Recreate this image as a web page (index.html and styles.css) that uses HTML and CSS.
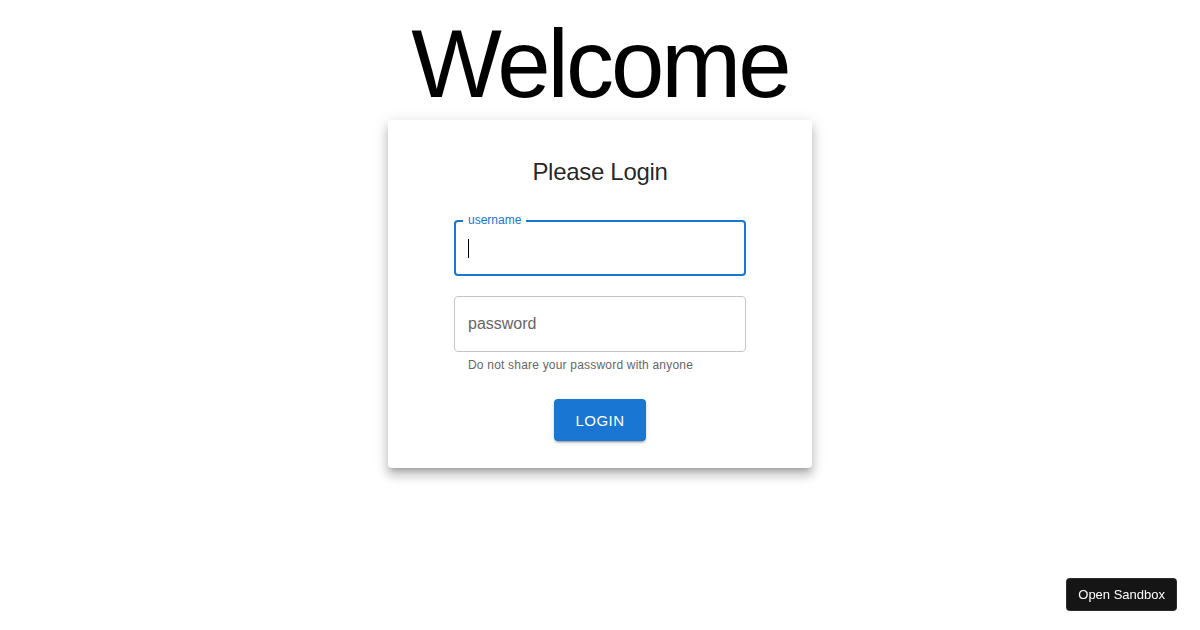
FILE: index.html
```html
<!DOCTYPE html>
<html lang="en">
<head>
    <meta charset="UTF-8">
    <meta name="viewport" content="width=device-width, initial-scale=1.0">
    <title>Login</title>
    <link rel="stylesheet" href="styles.css">
</head>
<body>
    <div class="page">
        <h1 class="welcome">Welcome</h1>
        <div class="card">
            <h2 class="card-title">Please Login</h2>
            <form class="login-form">
                <div class="field focused">
                    <span class="field-label">username</span>
                    <span class="caret"></span>
                </div>
                <div class="field-group">
                    <div class="field">
                        <input type="password" class="field-input" placeholder="password">
                    </div>
                    <p class="helper">Do not share your password with anyone</p>
                </div>
                <button type="button" class="login-btn">Login</button>
            </form>
        </div>
    </div>

    <button type="button" class="sandbox-btn">Open Sandbox</button>
</body>
</html>
```

FILE: styles.css
```css
html, body {
    margin: 0;
    height: 100%;
    background: #fff;
    font-family: "Liberation Sans", Arial, sans-serif;
}

.page {
    display: flex;
    flex-direction: column;
    align-items: center;
    padding-top: 8px;
}

.welcome {
    margin: 0;
    font-size: 96px;
    line-height: 112px;
    font-weight: 400;
    letter-spacing: -3px;
    color: #000;
}

.card {
    width: 424px;
    box-sizing: border-box;
    padding: 36px 0 27px;
    background: #fff;
    border-radius: 4px;
    box-shadow: 0 5px 5px -3px rgba(0, 0, 0, 0.2),
                0 8px 10px 1px rgba(0, 0, 0, 0.14),
                0 3px 14px 2px rgba(0, 0, 0, 0.12);
}

.card-title {
    margin: 0;
    text-align: center;
    font-size: 24px;
    line-height: 32px;
    font-weight: 400;
    letter-spacing: -0.3px;
    color: rgba(0, 0, 0, 0.87);
}

.login-form {
    display: flex;
    flex-direction: column;
    align-items: center;
    margin-top: 32px;
}

.field {
    position: relative; /* for the floating label */
    width: 292px;
    height: 56px;
    box-sizing: border-box;
    border: 1px solid #c4c4c4;
    border-radius: 4px;
    display: flex;
    align-items: center;
}

.field.focused {
    border: 2px solid #1976d2;
    padding-left: 12px;
}

.field-label {
    position: absolute;
    top: -9px;
    left: 7px;
    padding: 0 5px;
    background: #fff;
    font-size: 12px;
    line-height: 14px;
    color: #1976d2;
}

.caret {
    width: 1px;
    height: 19px;
    background: #000;
}

.field-group {
    margin-top: 20px;
}

.field-input {
    width: 100%;
    height: 100%;
    box-sizing: border-box;
    border: none;
    outline: none;
    background: transparent;
    padding: 0 13px;
    font-family: inherit;
    font-size: 16px;
    color: rgba(0, 0, 0, 0.87);
}

.field-input::placeholder {
    color: #666;
    opacity: 1;
}

.helper {
    margin: 3px 14px 0;
    font-size: 12px;
    line-height: 20px;
    letter-spacing: 0.2px;
    color: #666;
}

.login-btn {
    margin-top: 24px;
    width: 92px;
    height: 42px;
    border: none;
    border-radius: 4px;
    background: #1976d2;
    color: #fff;
    font-family: inherit;
    font-size: 15px;
    letter-spacing: 0.45px;
    text-transform: uppercase;
    cursor: pointer;
    box-shadow: 0 3px 1px -2px rgba(0, 0, 0, 0.2),
                0 2px 2px 0 rgba(0, 0, 0, 0.14),
                0 1px 5px 0 rgba(0, 0, 0, 0.12);
}

.sandbox-btn {
    position: fixed;
    right: 23px;
    bottom: 19px;
    height: 33px;
    padding: 0 11px;
    border: 1px solid rgba(255, 255, 255, 0.1);
    border-radius: 4px;
    background: #151515;
    color: #fff;
    font-family: inherit;
    font-size: 13px;
}
```
